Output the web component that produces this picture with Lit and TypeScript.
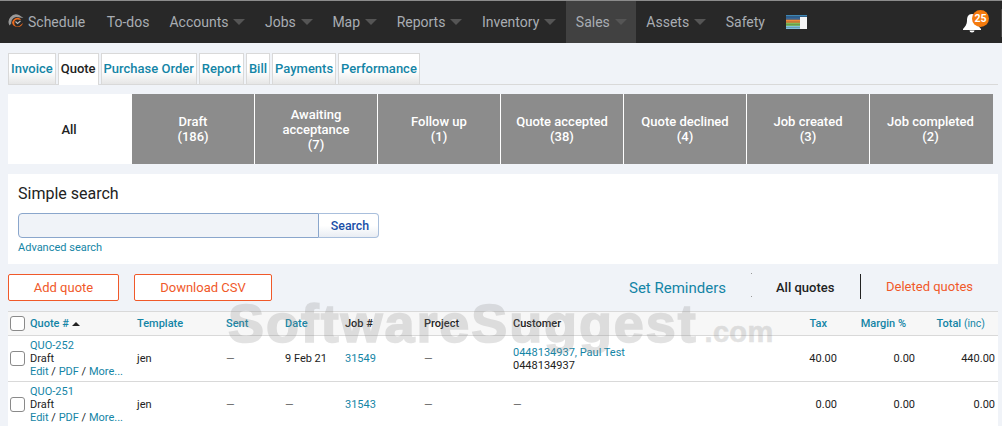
import { LitElement, html, css, svg } from "lit";
import { customElement } from "lit/decorators.js";

const navItems: [string, boolean, boolean][] = [
  ["To-dos", false, false],
  ["Accounts", true, false],
  ["Jobs", true, false],
  ["Map", true, false],
  ["Reports", true, false],
  ["Inventory", true, false],
  ["Sales", true, true],
  ["Assets", true, false],
  ["Safety", false, false],
];
const tabs = ["Invoice", "Quote", "Purchase Order", "Report", "Bill", "Payments", "Performance"];
const statuses = [
  ["Draft", "(186)"],
  ["Awaiting", "acceptance", "(7)"],
  ["Follow up", "(1)"],
  ["Quote accepted", "(38)"],
  ["Quote declined", "(4)"],
  ["Job created", "(3)"],
  ["Job completed", "(2)"],
];

@customElement("app-root")
export class AppRoot extends LitElement {
  static styles = css`
    :host {
      display: block;
      width: 1002px;
      height: 426px;
      overflow: hidden;
      position: relative;
      background: #f0f3f8;
      font-family: Roboto, "Liberation Sans", sans-serif;
      font-size: 11px;
      color: #222;
      --link: #1485a6;
    }
    a { color: var(--link); text-decoration: none; }
    .topbar {
      height: 42px;
      border-top: 1px solid #8c8c8c;
      background: #282828;
      display: flex;
      align-items: stretch;
      color: #a9adb3;
      font-size: 14px;
      position: relative;
    }
    .topbar::after {
      content: ""; position: absolute; right: 0; top: 8px; width: 1px; height: 28px; background: #4a4a4a;
    }
    .brand { display: flex; align-items: center; padding-left: 8px; gap: 3px; margin-right: 11.6px; }
    .nav { display: flex; align-items: center; padding: 0 10px; white-space: nowrap; }
    .nav.caret { padding-right: 9.55px; }
    .nav.active { background: #414141; }
    .caretshape {
      width: 0; height: 0; margin-left: 5px;
      border-left: 6px solid transparent;
      border-right: 6px solid transparent;
      border-top: 6px solid #555;
    }
    .nav .name { display: block; }
    .flag { margin-left: 11px; align-self: center; display: block; }
    .bell { position: absolute; left: 962px; top: 9px; width: 28px; height: 24px; }
    .bellicon { position: absolute; left: 0; top: 3px; }
    .badge {
      position: absolute; left: 10px; top: 0;
      width: 17px; height: 17px; border-radius: 50%;
      background: #f47a0d; color: #fff;
      font-size: 10.5px; font-weight: 700; line-height: 17px; text-align: center;
    }
    .tabs {
      margin: 10px 4px 0 8px;
      height: 31px;
      border-bottom: 1px solid #d9d9d9;
      display: flex; gap: 2px;
    }
    .tab {
      height: 31px; box-sizing: border-box;
      border: 1px solid #d9d9d9; border-bottom: none;
      padding: 0 2px 2px;
      display: flex; align-items: center; justify-content: center;
      font-size: 13px; font-weight: 500; color: var(--link);
      background: linear-gradient(#ffffff 55%, #e6e6e6);
      white-space: nowrap;
    }
    .tab.on { background: #fff; color: #222; height: 32px; padding-bottom: 3px; }
    .statuses {
      margin: 9px 0 0 8px; width: 986px; height: 70px;
      display: grid; grid-template-columns: 124px repeat(7, 123px);
    }
    .st {
      background: #8c8c8c; color: #fff; font-weight: 500; font-size: 13px; line-height: 15px;
      display: flex; flex-direction: column; align-items: center; justify-content: center;
      border-right: 1px solid #fff; box-sizing: border-box; text-align: center;
    }
    .st:last-child { border-right: none; padding-right: 2px; }
    .st.on { background: #fff; color: #222; border-right: none; padding-right: 2px; }
    .search {
      margin: 10px 4px 0 8px; height: 90px; background: #fff;
      padding: 11px 10px 0; box-sizing: border-box;
    }
    .search h2 { margin: 0; font-size: 16px; font-weight: 400; line-height: 18px; color: #222; }
    .sform { display: flex; margin-top: 10px; height: 25px; }
    .sinput {
      width: 301px; box-sizing: border-box; height: 25px;
      background: #f0f3f8; border: 1px solid #8aa6cc; border-radius: 4px 0 0 4px;
    }
    .sbtn {
      width: 60px; box-sizing: border-box; height: 25px; padding-left: 3px;
      border: 1px solid #a9bfdc; border-left: none; border-radius: 0 4px 4px 0;
      background: linear-gradient(#ffffff 50%, #e9edf3);
      color: #1a4fa8; font-size: 12.4px; font-weight: 500;
      display: flex; align-items: center; justify-content: center;
    }
    .adv { display: block; margin-top: 2px; font-size: 11px; line-height: 15px; }
    .actions {
      margin: 10px 8px 0 8px; height: 27px; display: flex; align-items: center; white-space: nowrap;
    }
    .obtn {
      height: 27px; box-sizing: border-box; background: #fff;
      border: 1px solid #f0592a; border-radius: 2px; color: #f0592a;
      font-size: 13px; display: flex; align-items: center; justify-content: center;
    }
    .obtn.a { width: 111px; }
    .obtn.b { width: 138px; margin-left: 15px; }
    .spacer { flex: 1; }
    .rem { font-size: 15px; color: var(--link); }
    .all { position: relative; font-size: 13px; font-weight: 500; color: #222; margin-left: 50px; width: 84px; }
    .all::before, .all::after {
      content: ""; position: absolute; left: -25px; width: 1px; height: 1px; background: #999;
    }
    .all::before { top: -7px; }
    .all::after { top: 16px; }
    .del {
      font-size: 13px; color: #f0592a; width: 134px; box-sizing: border-box; padding-left: 25px;
      border-left: 1px solid #222; height: 25px; line-height: 26px; align-self: flex-start;
    }
    .table { margin: 10px 4px 0 8px; }
    .row {
      display: grid;
      grid-template-columns: 22px 107px 89px 59px 60px 79px 89px 1fr 70px 78px 80px;
      align-items: center;
      background: #fff; border-bottom: 1px solid #d9d9d9;
      height: 46px; box-sizing: border-box; line-height: 13px; padding: 0 3px 0 0;
    }
    .row.head {
      height: 25px; background: #f7f7f7; border-top: 1px solid #d9d9d9;
      font-weight: 500; line-height: 15px;
    }
    .row.head a { font-weight: 500; }
    .num { text-align: right; }
    .row.head .num { padding-right: 10px; }
    .row.head .num.mid { padding-right: 9px; }
    .row.head .num small { font-size: 10.5px; font-weight: 400; }
    .cb {
      width: 13px; height: 13px; box-sizing: content-box; margin-left: 2px;
      border: 1px solid #8a8a8a; border-radius: 3px; background: #fff;
    }
    .dash { color: #666; }
    .arrow {
      display: inline-block; width: 0; height: 0; margin-left: 3px; vertical-align: 1px;
      border-left: 4px solid transparent; border-right: 4px solid transparent; border-bottom: 4px solid #222;
    }
    .mark {
      position: absolute; left: 228px; top: 293px; pointer-events: none; white-space: nowrap;
      font-family: "Liberation Sans", Arial, sans-serif; font-weight: 700; font-size: 54px; line-height: 60px;
      color: #8a8a8a; opacity: 0.24; letter-spacing: 1.9px; -webkit-text-stroke: 1.6px #8a8a8a;
    }
    .mark span { font-size: 29px; letter-spacing: 0.3px; -webkit-text-stroke: 0.6px #8a8a8a; margin-left: 7px; }
  `;

  private logo() {
    return html`<svg width="17" height="17" viewBox="0 0 17 17">
      ${svg`<path d="M1.500 11.500A7.500 7.500 0 0 1 11 1L15.500 4L11.500 3.500A5.800 5.800 0 0 0 3.300 9.500Z" fill="#999"></path>`}
      ${svg`<path d="M4 8.500A5.500 5.500 0 0 1 12 4.500L13 6L9.500 5.500A3.300 3.300 0 0 0 6.300 9A3.300 3.300 0 0 0 12 11.500L15 9A5.700 5.700 0 0 1 4 8.500Z" fill="#ee6c1f"></path>`}
      ${svg`<path d="M7.500 7.500L9.500 9.500L12.500 7" fill="none" stroke="#bdbdbd" stroke-width="1.100"></path>`}
    </svg>`;
  }

  private flag() {
    const colors = ["#3f86b4", "#2d5f93", "#3f6f9f", "#ef8a3c", "#ef8a3c", "#7dbb57", "#7dbb57", "#7fc0dd", "#7fc0dd"];
    return html`<svg class="flag" width="21" height="14" viewBox="0 0 21 14">
      ${colors.map((c, i) => svg`<rect x="0" y="${i * 1.56}" width="21" height="1.6" fill="${c}"></rect>`)}
      <rect x="14" y="2" width="7" height="12" fill="#f6f6f6"></rect>
    </svg>`;
  }

  private bell() {
    return html`<div class="bell">
      <svg class="bellicon" width="20" height="20" viewBox="0 0 20 20">
        ${svg`<path d="M10 1C6 1 5 4 5 8C5 11 3 14 1 16V17H19V16C17 14 15 11 15 8C15 4 14 1 10 1Z" fill="#fff"></path>`}
        ${svg`<path d="M7.500 17.500H12.500A2.500 2 0 0 1 7.500 17.500Z" fill="#fff"></path>`}
      </svg>
      <div class="badge">25</div>
    </div>`;
  }

  private quoteCell(id: string) {
    return html`<div><a>${id}</a><br />Draft<br /><a>Edit</a> / <a>PDF</a> / <a>More...</a></div>`;
  }

  render() {
    return html`
      <div class="topbar">
        <div class="brand">${this.logo()}<span>Schedule</span></div>
        ${navItems.map(
          ([n, c, on]) => html`<div class="nav ${c ? "caret" : ""} ${on ? "active" : ""}">
            <span class="name">${n}</span>${c ? html`<span class="caretshape"></span>` : ""}
          </div>`
        )}
        ${this.flag()} ${this.bell()}
      </div>
      <div class="tabs">
        ${tabs.map((t) => html`<div class="tab ${t === "Quote" ? "on" : ""}">${t}</div>`)}
      </div>
      <div class="statuses">
        <div class="st on">All</div>
        ${statuses.map((s) => html`<div class="st">${s.map((l) => html`<div>${l}</div>`)}</div>`)}
      </div>
      <div class="search">
        <h2>Simple search</h2>
        <div class="sform"><div class="sinput"></div><div class="sbtn">Search</div></div>
        <a class="adv">Advanced search</a>
      </div>
      <div class="actions">
        <div class="obtn a">Add quote</div>
        <div class="obtn b">Download CSV</div>
        <div class="spacer"></div>
        <a class="rem">Set Reminders</a>
        <div class="all">All quotes</div>
        <div class="del">Deleted quotes</div>
      </div>
      <div class="table">
        <div class="row head">
          <div class="cb"></div>
          <div><a>Quote #</a><span class="arrow"></span></div>
          <a>Template</a><a>Sent</a><a>Date</a>
          <div>Job #</div><div>Project</div><div>Customer</div>
          <a class="num">Tax</a><a class="num mid">Margin %</a><a class="num">Total <small>(inc)</small></a>
        </div>
        <div class="row">
          <div class="cb"></div>
          ${this.quoteCell("QUO-252")}
          <div>jen</div><div class="dash">—</div><div>9 Feb 21</div><a>31549</a><div class="dash">—</div>
          <div><a>0448134937, Paul Test</a><br />0448134937</div>
          <div class="num">40.00</div><div class="num">0.00</div><div class="num">440.00</div>
        </div>
        <div class="row">
          <div class="cb"></div>
          ${this.quoteCell("QUO-251")}
          <div>jen</div><div class="dash">—</div><div class="dash">—</div><a>31543</a><div class="dash">—</div>
          <div class="dash">—</div>
          <div class="num">0.00</div><div class="num">0.00</div><div class="num">0.00</div>
        </div>
      </div>
      <div class="mark">SoftwareSuggest<span>.com</span></div>
    `;
  }
}
